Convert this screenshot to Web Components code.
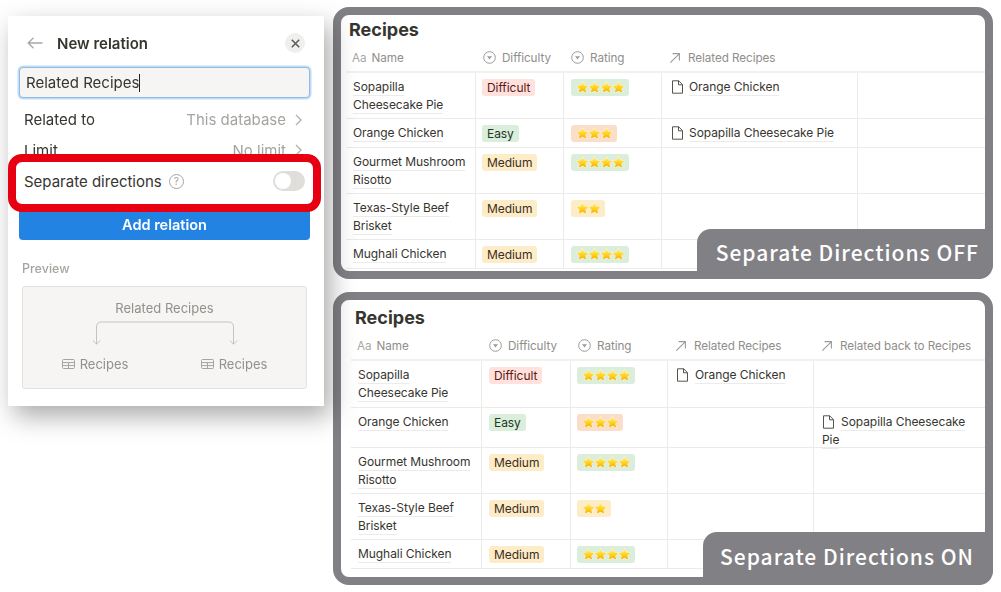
<!DOCTYPE html>
<html>
<head>
<meta charset="utf-8">
<title>Separate directions</title>
<style>
  html, body { margin: 0; padding: 0; background: #fff; }
  body { font-family: Inter, "Liberation Sans", sans-serif; color: #37352f; }
  .page { display: flex; align-items: flex-start; width: 1001px; height: 592px; overflow: hidden; filter: blur(.3px); }
  .frames { display: flex; flex-direction: column; gap: 13px; margin: 7px 0 0 9px; }
</style>
</head>
<body>
<div class="page">
  <relation-panel></relation-panel>
  <div class="frames">
    <recipe-frame label="Separate Directions OFF" pad-top="4" pad-left="5" pad-bottom="2" title-left="3" label-pad="9px 14px 0 19px" label-h="50">
      <recipe-table mode="off"></recipe-table>
    </recipe-frame>
    <recipe-frame label="Separate Directions ON" pad-top="7" pad-left="10" pad-bottom="8" title-left="4" label-pad="10px 19px 0 17px" label-h="53">
      <recipe-table mode="on"></recipe-table>
    </recipe-frame>
  </div>
</div>

<script>
const ICONS = {
  back: '<svg width="16" height="12" viewBox="0 0 16 12" fill="none" stroke="#a8a7a3" stroke-width="1.3"><path d="M15.5 6H1.2M6.5.8 1.2 6l5.3 5.2"/></svg>',
  close: '<svg width="9" height="9" viewBox="0 0 9 9" fill="none" stroke="#5f5e5a" stroke-width="1.6"><path d="M.8.8l7.4 7.4M8.2.8.8 8.2"/></svg>',
  chevron: '<svg width="7" height="12" viewBox="0 0 7 12" fill="none" stroke="#b4b3af" stroke-width="1.4"><path d="M1 1l5 5-5 5"/></svg>',
  select: '<svg width="13" height="13" viewBox="0 0 13 13" fill="none"><circle cx="6.5" cy="6.5" r="5.8" stroke="#9b9a97" stroke-width="1"/><path d="M4 5.2h5L6.5 8.4z" fill="#9b9a97"/></svg>',
  ne: '<svg class="ne" width="12" height="12" viewBox="0 0 12 12" fill="none" stroke="#9b9a97" stroke-width="1.1"><path d="M1.3 10.7 10.2 1.8M3.6 1.6h6.8v6.8"/></svg>',
  doc: '<svg width="13" height="14" viewBox="0 0 13 14" fill="none" stroke="#55534e" stroke-width="1"><path d="M1.5.8h6.2l3.8 3.8v8.6h-10zM7.5.8v4h4"/></svg>',
  grid: '<svg width="13" height="10" viewBox="0 0 13 10" fill="none" stroke="#a5a4a0" stroke-width="1"><rect x=".5" y=".5" width="12" height="9" rx="1"/><path d="M.5 3.6h12M.5 6.6h12M6.5 3.6v6"/></svg>'
};

// relation dialog on the left
class RelationPanel extends HTMLElement {
  connectedCallback() {
    this.attachShadow({ mode: 'open' });
    this.shadowRoot.innerHTML = `
      <style>
        :host {
          display: block; position: relative; z-index: 2; flex: none;
          width: 316px; height: 390px; box-sizing: border-box;
          margin: 16px 0 0 8px; padding: 13px 14px 0 11px;
          background: #fff; box-shadow: 6px 10px 24px rgba(0,0,0,.34);
          font-size: 15px; color: #37352f;
        }
        .head { display: flex; align-items: center; height: 28px; }
        .back { display: flex; margin-left: 8px; width: 30px; }
        .head b { font-weight: 600; font-size: 15px; flex: 1; }
        .close { width: 20px; height: 20px; border-radius: 50%; background: #efefed; display: flex; align-items: center; justify-content: center; margin-right: 5px; }
        .input { margin-top: 10px; height: 31px; box-sizing: border-box; padding: 0 6px; display: flex; align-items: center; background: #f6f5f3; border: 1px solid #8cbdea; border-radius: 4px; box-shadow: 0 0 0 1.5px #c2dcf4; font-size: 15px; }
        .caret { width: 1px; height: 18px; background: #222; }
        .row { display: flex; align-items: center; height: 30px; box-sizing: border-box; padding: 1px 8px 0 5px; }
        .row span:first-child { flex: 1; }
        .row .val { color: #a5a4a0; margin-right: 9px; }
        .first { margin-top: 6px; }
        .second { height: 31px; }
        .box { position: relative; z-index: 1; display: flex; align-items: center; margin: -11px -11px 0; height: 58px; box-sizing: border-box; padding: 0 8px 4px; background: #fff; border: 8px solid #e60012; border-radius: 14px; }
        .box .help { margin-left: 7px; flex: 1; display: flex; }
        .help i { display: block; width: 15px; height: 15px; box-sizing: border-box; border: 1px solid #a5a4a0; border-radius: 50%; color: #a5a4a0; font: 10px/13px Inter, sans-serif; text-align: center; }
        .toggle { width: 32px; height: 20px; border-radius: 10px; background: #dfdedb; padding: 2px; box-sizing: border-box; }
        .toggle i { display: block; width: 16px; height: 16px; border-radius: 50%; background: #fff; }
        .add { margin-top: -2px; height: 30px; box-sizing: border-box; padding-bottom: 2px; display: flex; align-items: center; justify-content: center; background: #2383e2; color: #fff; font-weight: 600; font-size: 14.5px; border-radius: 0 0 4px 4px; }
        .plabel { margin: 21px 0 0 3px; height: 16px; line-height: 16px; font-size: 12.5px; font-weight: 500; color: #a5a4a0; }
        .preview { margin: 9px 3px 0; height: 103px; width: 285px; box-sizing: border-box; background: #f6f5f3; border: 1px solid #e3e2df; border-radius: 3px; display: flex; flex-direction: column; align-items: center; padding-top: 13px; color: #91908c; font-size: 13px; }
        .preview .t { line-height: 16px; }
        .preview svg.link { display: block; margin-top: 5px; }
        .targets { display: grid; grid-template-columns: 139px 139px; margin-top: 11px; line-height: 16px; }
        .targets div { display: flex; align-items: center; justify-content: center; gap: 5px; }
      </style>
      <div class="head">
        <span class="back">${ICONS.back}</span>
        <b>New relation</b>
        <span class="close">${ICONS.close}</span>
      </div>
      <div class="input"><span>Related Recipes</span><span class="caret"></span></div>
      <div class="row first"><span>Related to</span><span class="val">This database</span>${ICONS.chevron}</div>
      <div class="row second"><span>Limit</span><span class="val">No limit</span>${ICONS.chevron}</div>
      <div class="box">
        <span>Separate directions</span>
        <span class="help"><i>?</i></span>
        <span class="toggle"><i></i></span>
      </div>
      <div class="add">Add relation</div>
      <div class="plabel">Preview</div>
      <div class="preview">
        <span class="t">Related Recipes</span>
        <svg class="link" width="146" height="24" viewBox="0 0 146 24" fill="none" stroke="#c4c3bf" stroke-width="1">
          <path d="M4.5 23V6q0-5 5-5h127q5 0 5 5v17M.8 19.5l3.7 3.7 3.7-3.7M137.8 19.5l3.7 3.7 3.7-3.7"/>
        </svg>
        <div class="targets">
          <div>${ICONS.grid}<span>Recipes</span></div>
          <div>${ICONS.grid}<span>Recipes</span></div>
        </div>
      </div>`;
  }
}

// grey frame with the corner label
class RecipeFrame extends HTMLElement {
  connectedCallback() {
    const a = n => this.getAttribute(n);
    this.attachShadow({ mode: 'open' });
    this.shadowRoot.innerHTML = `
      <style>
        :host { display: block; position: relative; width: 660px; box-sizing: border-box; border: 8px solid #818085; border-radius: 16px; background: #fff; padding: ${a('pad-top')}px 0 ${a('pad-bottom')}px ${a('pad-left')}px; }
        h2 { margin: 0 0 3px ${a('title-left')}px; font-size: 18px; line-height: 22px; font-weight: 700; color: #37352f; }
        .label { position: absolute; right: -8px; bottom: -8px; height: ${a('label-h')}px; box-sizing: border-box; padding: ${a('label-pad')}; background: #818085; color: #fff; border-radius: 14px 0 14px 0; font: 500 21px/28px "Noto Sans CJK JP", "Noto Sans", sans-serif; letter-spacing: 1px; white-space: nowrap; }
      </style>
      <h2>Recipes</h2>
      <slot></slot>
      <div class="label">${a('label')}</div>`;
  }
}

class StarTag extends HTMLElement {
  connectedCallback() {
    const n = +this.getAttribute('count');
    const bg = { 4: '#dbeddb', 3: '#fadec9', 2: '#fdecc8' }[n];
    const star = '<svg width="13" height="13" viewBox="0 0 24 24"><path d="M12 1.5 15.2 8.05 22.5 9.1 17.2 14.2 18.5 21.4 12 18 5.5 21.4 6.8 14.2 1.5 9.1 8.8 8.05z" fill="url(#g)" stroke="#fff6cf" stroke-width="2" stroke-linejoin="round" paint-order="stroke"/></svg>';
    this.attachShadow({ mode: 'open' });
    this.shadowRoot.innerHTML = `
      <style>
        :host { display: inline-flex; align-items: center; height: 17px; padding: 0 5px; background: ${bg}; border-radius: 3px; }
        svg { display: block; margin: 0 -.5px; }
        svg.defs { position: absolute; margin: 0; }
      </style>
      <svg class="defs" width="0" height="0"><defs><linearGradient id="g" x1="0" y1="0" x2="0" y2="1"><stop offset="0" stop-color="#ffee8c"/><stop offset=".55" stop-color="#ffd21f"/><stop offset="1" stop-color="#f5a800"/></linearGradient></defs></svg>
      ${star.repeat(n)}`;
  }
}

const RECIPES = [
  ['Sopapilla Cheesecake Pie', 'Difficult', 4],
  ['Orange Chicken', 'Easy', 3],
  ['Gourmet Mushroom Risotto', 'Medium', 4],
  ['Texas-Style Beef Brisket', 'Medium', 2],
  ['Mughali Chicken', 'Medium', 4]
];
const TAGS = {
  Difficult: ['#ffe2dd', '#5d1715'],
  Easy: ['#dbeddb', '#1c3829'],
  Medium: ['#fdecc8', '#402c1b']
};

class RecipeTable extends HTMLElement {
  connectedCallback() {
    const on = this.getAttribute('mode') === 'on';
    const cols = on ? '131px 89px 97px 146px 169px' : '130px 88px 98px 196px 2px';
    const heights = on ? [47, 40, 46, 46, 29] : [46, 29, 46, 46, 29];
    const link = t => t ? `<span class="link">${ICONS.doc}<u>${t}</u></span>` : '';
    const heads = [
      '<span class="aa">Aa</span>Name',
      ICONS.select + 'Difficulty',
      ICONS.select + 'Rating',
      ICONS.ne + 'Related Recipes'
    ];
    if (on) heads.push(ICONS.ne + 'Related back to Recipes');
    const rows = RECIPES.map((r, i) => {
      const rel = on ? [i == 0 ? 'Orange Chicken' : '', i == 1 ? 'Sopapilla Cheesecake Pie' : '']
                     : [i == 0 ? 'Orange Chicken' : i == 1 ? 'Sopapilla Cheesecake Pie' : '', ''];
      const tag = TAGS[r[1]];
      return `<div class="row" style="height:${heights[i]}px">
        <div class="cell name"><u>${r[0]}</u></div>
        <div class="cell tagc"><span class="tag" style="background:${tag[0]};color:${tag[1]}">${r[1]}</span></div>
        <div class="cell tagc stars"><star-tag count="${r[2]}"></star-tag></div>
        <div class="cell rel">${link(rel[0])}</div>
        <div class="cell rel last">${link(rel[1])}</div>
      </div>`;
    }).join('');
    this.attachShadow({ mode: 'open' });
    this.shadowRoot.innerHTML = `
      <style>
        :host { display: block; font-size: 12px; letter-spacing: -.06px; color: #37352f; }
        .row { display: grid; grid-template-columns: ${cols}; box-sizing: border-box; border-bottom: 1px solid #ebebea; }
        .header { height: 29px; border-bottom-width: 2px; border-bottom-color: #f1f1f0; color: #8f8e8a; font-size: 11.7px; }
        .th { display: flex; align-items: center; gap: 6px; padding-left: 7px; white-space: nowrap; }
        .th svg { flex: none; }
        .th svg.ne { margin-right: 1px; }
        .aa { color: #a9a8a4; margin-right: -1px; }
        .th:first-child { padding-left: 6px; }
        .cell { border-right: 1px solid #ebebea; box-sizing: border-box; line-height: 18px; }
        .cell.last { border-right: 0; }
        .name { padding: 5px 3px 0 7px; }
        u { text-decoration: none; border-bottom: 1px solid #ebebe9; padding-bottom: 1px; }
        .tagc { padding: 6px 0 0 ${on ? 7 : 6}px; line-height: 17px; }
        .tagc.stars { padding-left: ${on ? 6 : 7}px; }
        .tag { display: inline-block; height: 17px; padding: 0 5px; border-radius: 3px; font-size: 12px; line-height: 17px; }
        .rel { padding: 5px 6px 0 ${on ? 8 : 9}px; }
        .link svg { vertical-align: -3px; margin-right: ${on ? 6 : 5}px; }
      </style>
      <div class="row header">${heads.map(h => `<div class="th">${h}</div>`).join('')}${on ? '' : '<div></div>'}</div>
      ${rows}`;
  }
}

customElements.define('relation-panel', RelationPanel);
customElements.define('recipe-frame', RecipeFrame);
customElements.define('star-tag', StarTag);
customElements.define('recipe-table', RecipeTable);
</script>
</body>
</html>
